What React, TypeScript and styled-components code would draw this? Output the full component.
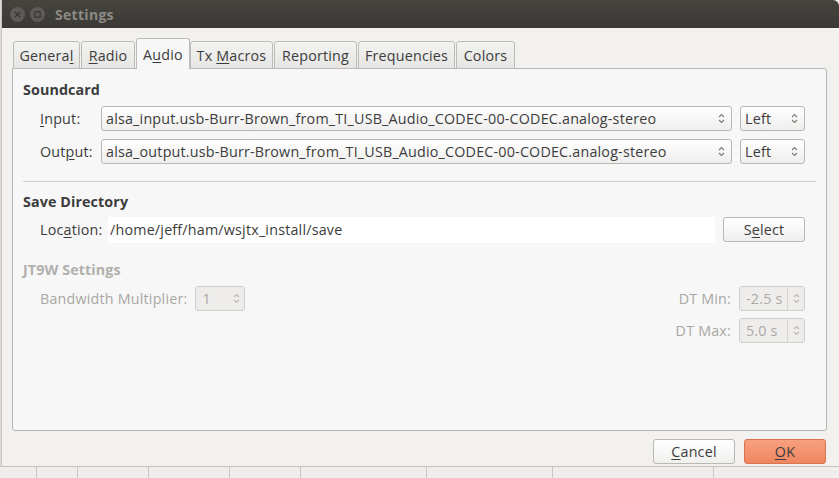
import React from 'react';
import styled, { createGlobalStyle } from 'styled-components';

const Global = createGlobalStyle`
  html, body { margin: 0; padding: 0; }
  body {
    width: 839px;
    height: 478px;
    overflow: hidden;
    background: #dcdbd8;
    font-family: "Open Sans", "Noto Sans", sans-serif;
    font-size: 14.3px;
    letter-spacing: 0.2px;
    color: #3c3c3c;
  }
`

const Screen = styled.div`
  display: flex;
  flex-direction: column;
  width: 839px;
  height: 478px;
`

const Window = styled.div`
  display: flex;
  flex-direction: column;
  margin-left: 1px;
  height: 466px;
  background: #f2f1f0;
  border-left: 1px solid #c9c7c3;
`

const TitleBar = styled.div`
  height: 28px;
  display: flex;
  align-items: center;
  background: linear-gradient(#45443f, #3a3935);
  border-top-right-radius: 6px;
  padding-left: 8px;
  gap: 5px;
`

const WinButton = styled.div`
  width: 15px;
  height: 15px;
  border-radius: 50%;
  background: #5c5b56;
  display: flex;
  align-items: center;
  justify-content: center;
`

const Title = styled.span`
  margin-left: 5px;
  font-family: "Open Sans", sans-serif;
  font-weight: 700;
  font-size: 14px;
  color: #8c8a84;
  letter-spacing: 0.3px;
`

const Body = styled.div`
  flex: 1;
  display: flex;
  flex-direction: column;
  padding: 10px 12px 0 10px;
`

const TabBar = styled.div`
  display: flex;
  align-items: flex-end;
  padding-left: 1px;
  height: 31px;
  position: relative;
  z-index: 1;
  margin-bottom: -1px;
`

const Tab = styled.div<{ $active?: boolean; $w: number }>`
  width: ${p => p.$w}px;
  box-sizing: border-box;
  height: ${p => (p.$active ? 31 : 28)}px;
  display: flex;
  align-items: center;
  justify-content: center;
  border: 1px solid #bdbbb7;
  border-bottom: ${p => (p.$active ? 'none' : '1px solid #bdbbb7')};
  border-radius: 3px 3px 0 0;
  margin-right: ${p => (p.$active ? 0 : 1)}px;
  background: ${p => (p.$active ? '#f7f7f7' : 'linear-gradient(#f3f3f2, #e6e5e3)')};
  padding-top: ${p => (p.$active ? 0 : 1)}px;
  white-space: pre;
`

const Pane = styled.div`
  height: 363px;
  box-sizing: border-box;
  background: #f7f7f7;
  border: 1px solid #b7b5b1;
  border-radius: 0 3px 3px 3px;
  padding: 11px 10px 0 10px;
  display: flex;
  flex-direction: column;
`

const Heading = styled.div<{ $disabled?: boolean; $top?: number }>`
  font-weight: 700;
  height: 20px;
  line-height: 20px;
  letter-spacing: 0.1px;
  margin-top: ${p => p.$top ?? 0}px;
  color: ${p => (p.$disabled ? '#b1afab' : '#3c3c3c')};
`

const Row = styled.div<{ $top: number }>`
  display: flex;
  align-items: center;
  height: 25px;
  margin-top: ${p => p.$top}px;
  padding-left: 17px;
  padding-right: 11px;
  gap: 8px;
`

const Label = styled.span<{ $w?: number; $disabled?: boolean }>`
  width: ${p => (p.$w ? `${p.$w}px` : 'auto')};
  flex-shrink: 0;
  color: ${p => (p.$disabled ? '#a9a7a3' : '#3c3c3c')};
  white-space: nowrap;
`

const U = styled.span`
  text-decoration: underline;
  text-underline-offset: 2px;
`

const Combo = styled.div<{ $w?: number }>`
  ${p => (p.$w ? `width: ${p.$w}px; flex-shrink: 0;` : 'flex: 1;')}
  box-sizing: border-box;
  height: 25px;
  border: 1px solid #b9b7b2;
  border-radius: 3px;
  background: linear-gradient(#ffffff, #efeeed);
  display: flex;
  align-items: center;
  justify-content: space-between;
  padding: 0 6px 0 4px;
  white-space: nowrap;
  overflow: hidden;
`

const Separator = styled.div`
  height: 1px;
  background: #d2d0cc;
  margin: 17px 0 10px 0;
`

const PathField = styled.div`
  flex: 1;
  height: 26px;
  background: #ffffff;
  display: flex;
  align-items: center;
  padding-left: 2px;
  margin-left: -3px;
`

const Button = styled.button<{ $primary?: boolean }>`
  width: 82px;
  height: 25px;
  flex-shrink: 0;
  border-radius: 3px;
  font: inherit;
  letter-spacing: inherit;
  color: #3c3c3c;
  border: 1px solid ${p => (p.$primary ? '#d9734e' : '#bab8b3')};
  background: ${p => (p.$primary ? 'linear-gradient(#f7a07f, #ef8660)' : 'linear-gradient(#ffffff, #f0efee)')};
  padding: 0;
`

const Spin = styled.div<{ $w: number }>`
  width: ${p => p.$w}px;
  box-sizing: border-box;
  height: 25px;
  border: 1px solid #d0cecb;
  border-radius: 3px;
  background: #eeedec;
  display: flex;
  align-items: center;
  color: #ada9a5;
  flex-shrink: 0;
`

const SpinText = styled.span`
  flex: 1;
  padding-left: 6px;
  white-space: nowrap;
`

const SpinButtons = styled.div<{ $split?: boolean }>`
  width: 16px;
  height: 100%;
  display: flex;
  align-items: center;
  justify-content: center;
  border-left: ${p => (p.$split ? '1px solid #d6d4d1' : 'none')};
`

const Spacer = styled.div`
  flex: 1;
`

const Footer = styled.div`
  display: flex;
  justify-content: flex-end;
  gap: 9px;
  margin-top: 8px;
  padding-right: 1px;
`

const Behind = styled.div`
  flex: 1;
  background: #efeeec;
  border-top: 1px solid #c4c2be;
  display: flex;
`

const BehindCell = styled.div<{ $w: number }>`
  width: ${p => p.$w}px;
  border-right: 1px solid #c9c7c3;
`

function Arrows({ color = '#7c7a76' }: { color?: string }) {
  return (
    <svg width="7" height="13" viewBox="0 0 7 13">
      <path d="M1 5 L3.5 2.5 L6 5" fill="none" stroke={color} strokeWidth="1.1" />
      <path d="M1 8 L3.5 10.5 L6 8" fill="none" stroke={color} strokeWidth="1.1" />
    </svg>
  )
}

function SpinBox({ value, w, split }: { value: string; w: number; split?: boolean }) {
  return (
    <Spin $w={w}>
      <SpinText>{value}</SpinText>
      <SpinButtons $split={split}>
        <Arrows color="#bcbab6" />
      </SpinButtons>
    </Spin>
  )
}

const tabs: { name: React.ReactNode; w: number; active?: boolean }[] = [
  { name: <span>Genera<U>l</U></span>, w: 67 },
  { name: <span><U>R</U>adio</span>, w: 54 },
  { name: <span>A<U>u</U>dio</span>, w: 54, active: true },
  { name: <span>Tx <U>M</U>acros</span>, w: 83 },
  { name: <span>Reportin<U>g</U></span>, w: 83 },
  { name: <span>Frequencies</span>, w: 97 },
  { name: <span>Colors</span>, w: 59 },
]

export default function App() {
  return (
    <Screen>
      <Global />
      <Window>
        <TitleBar>
          <WinButton>
            <svg width="7" height="7" viewBox="0 0 7 7">
              <path d="M1 1 L6 6 M6 1 L1 6" stroke="#3a3935" strokeWidth="1.4" />
            </svg>
          </WinButton>
          <WinButton>
            <svg width="7" height="7" viewBox="0 0 7 7">
              <rect x="0.8" y="0.8" width="5.4" height="5.4" fill="none" stroke="#3a3935" strokeWidth="1.3" />
            </svg>
          </WinButton>
          <Title>Settings</Title>
        </TitleBar>
        <Body>
          <TabBar>
            {tabs.map((t, i) => (
              <Tab key={i} $w={t.w} $active={t.active}>{t.name}</Tab>
            ))}
          </TabBar>
          <Pane>
            <Heading>Soundcard</Heading>
            <Row $top={6}>
              <Label $w={53}><U>I</U>nput:</Label>
              <Combo>
                <span>alsa_input.usb-Burr-Brown_from_TI_USB_Audio_CODEC-00-CODEC.analog-stereo</span>
                <Arrows />
              </Combo>
              <Combo $w={65}>
                <span>Left</span>
                <Arrows />
              </Combo>
            </Row>
            <Row $top={8}>
              <Label $w={53}>Out<U>p</U>ut:</Label>
              <Combo>
                <span>alsa_output.usb-Burr-Brown_from_TI_USB_Audio_CODEC-00-CODEC.analog-stereo</span>
                <Arrows />
              </Combo>
              <Combo $w={65}>
                <span>Left</span>
                <Arrows />
              </Combo>
            </Row>
            <Separator />
            <Heading>Save Directory</Heading>
            <Row $top={5}>
              <Label $w={63}>Loc<U>a</U>tion:</Label>
              <PathField>/home/jeff/ham/wsjtx_install/save</PathField>
              <Button><span>S<U>e</U>lect</span></Button>
            </Row>
            <Heading $disabled $top={18}>JT9W Settings</Heading>
            <Row $top={6}>
              <Label $disabled>Bandwidth Multiplier:</Label>
              <SpinBox value="1" w={50} />
              <Spacer />
              <Label $disabled>DT Min:</Label>
              <SpinBox value="-2.5 s" w={66} split />
            </Row>
            <Row $top={7}>
              <Spacer />
              <Label $disabled>DT Max:</Label>
              <SpinBox value="5.0 s" w={66} split />
            </Row>
          </Pane>
          <Footer>
            <Button><span><U>C</U>ancel</span></Button>
            <Button $primary><span><U>O</U>K</span></Button>
          </Footer>
        </Body>
      </Window>
      <Behind>
        <BehindCell $w={36} />
        <BehindCell $w={40} />
        <BehindCell $w={70} />
        <BehindCell $w={80} />
        <BehindCell $w={70} />
        <BehindCell $w={125} />
        <BehindCell $w={125} />
        <BehindCell $w={160} />
      </Behind>
    </Screen>
  )
}
